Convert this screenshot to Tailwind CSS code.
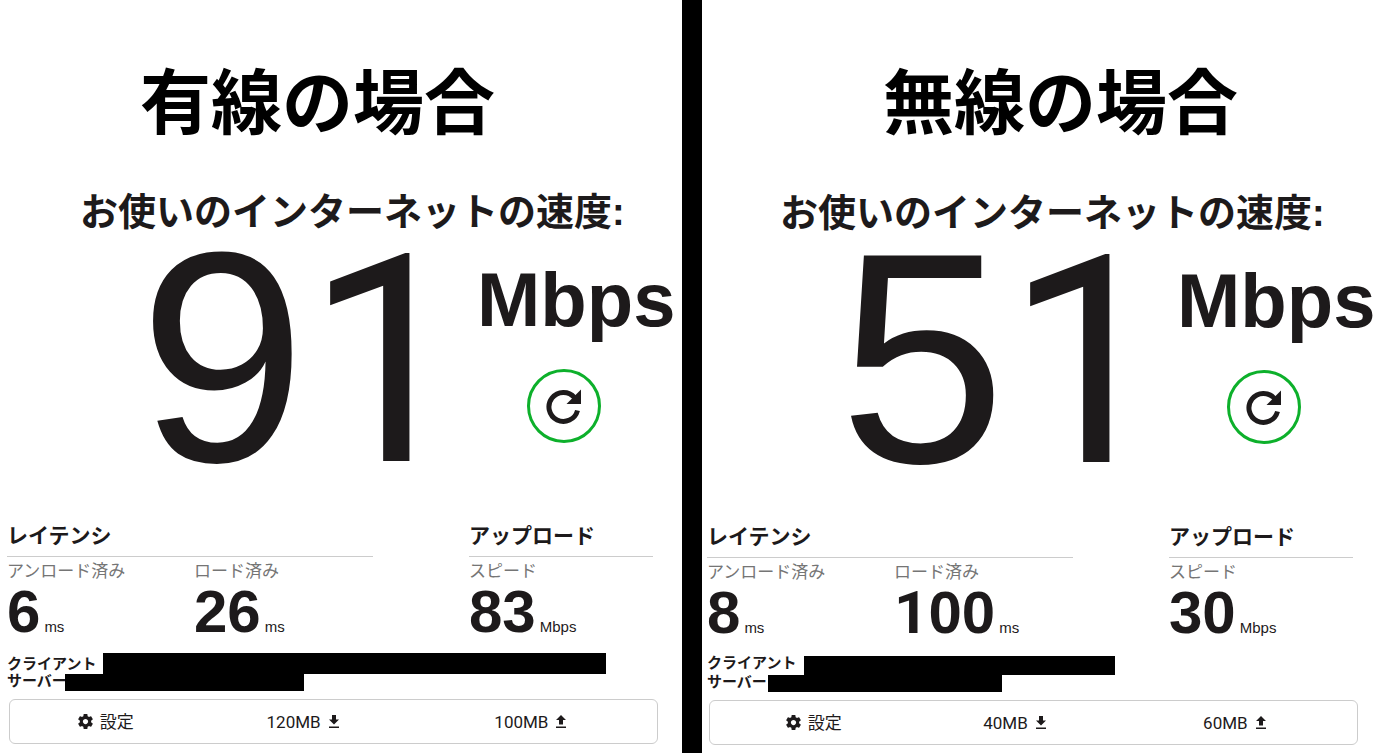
<!DOCTYPE html>
<html lang="ja">

<head>
    <meta charset="UTF-8">
    <meta name="viewport" content="width=device-width, initial-scale=1.0">
    <title>有線と無線の速度比較</title>
    <script src="https://cdn.jsdelivr.net/npm/@tailwindcss/browser@4"></script>
</head>

<body class="bg-white font-['Liberation_Sans','Noto_Sans_CJK_JP',sans-serif] text-[#1d1a1b]">
    <!-- Shared icons -->
    <svg class="hidden">
        <symbol id="refresh" viewBox="0 0 36 36">
            <path d="M31.500 22.500A14.500 14.500 0 1 1 28.500 9.500" fill="none" stroke="currentColor" stroke-width="5" />
            <path d="M35 1.500V16H20.500Z" fill="currentColor" />
        </symbol>
        <symbol id="gear" viewBox="2 2 20 20">
            <path fill="currentColor" d="M19.430 12.980c.04-.32.07-.64.07-.98s-.03-.66-.07-.98l2.110-1.650c.19-.15.24-.42.12-.64l-2-3.460c-.12-.22-.39-.3-.61-.22l-2.490 1c-.52-.4-1.080-.73-1.690-.98l-.38-2.650C14.460 2.180 14.250 2 14 2h-4c-.25 0-.46.18-.49.42l-.38 2.650c-.61.25-1.170.59-1.690.98l-2.490-1c-.23-.09-.49 0-.61.22l-2 3.460c-.13.22-.07.49.12.64l2.110 1.650c-.04.32-.07.65-.07.98s.03.66.07.98l-2.110 1.650c-.19.15-.24.42-.12.64l2 3.460c.12.22.39.3.61.22l2.490-1c.52.4 1.080.73 1.690.98l.38 2.650c.03.24.24.42.49.42h4c.25 0 .46-.18.49-.42l.38-2.650c.61-.25 1.170-.59 1.690-.98l2.490 1c.23.09.49 0 .61-.22l2-3.460c.12-.22.07-.49-.12-.64l-2.110-1.650zM12 15.500c-1.930 0-3.500-1.570-3.500-3.500s1.570-3.500 3.500-3.500 3.500 1.570 3.500 3.500-1.570 3.500-3.500 3.500z" />
        </symbol>
        <symbol id="download" viewBox="0 0 12 14">
            <path fill="currentColor" d="M4 0h4v4.500h3L6 9.500 1 4.500h3zM1 11.500h10V13H1z" />
        </symbol>
        <symbol id="upload" viewBox="0 0 12 14">
            <path fill="currentColor" d="M4 9.500h4V5h3L6 0 1 5h3zM1 11.500h10V13H1z" />
        </symbol>
    </svg>

    <main class="flex min-h-screen">
        <!-- Wired -->
        <section class="flex-[682] min-w-0 pt-16">
            <h1 class="pl-[140px] text-[71px] leading-[80px] font-bold text-black whitespace-nowrap">有線の場合</h1>
            <h2 class="mt-12 pl-20 text-[38px] leading-10 font-bold whitespace-nowrap">お使いのインターネットの速度:</h2>
            <div class="flex pl-[139px]">
                <p class="w-[338px] shrink-0 text-[300px] leading-[250px] whitespace-nowrap">9<span class="font-[Roboto] text-[291px] leading-0">1</span></p>
                <div class="pt-7">
                    <p class="text-[76px] leading-20 font-bold">Mbps</p>
                    <button type="button" aria-label="再テスト"
                        class="mt-[29px] ml-[50px] flex size-[74px] items-center justify-center rounded-full border-3 border-[#0db02b]">
                        <svg class="size-9"><use href="#refresh" /></svg>
                    </button>
                </div>
            </div>

            <div class="grid grid-cols-[366fr_184fr] gap-24 pt-[42px] pl-[7px] pr-[29px]">
                <div>
                    <h3 class="border-b border-[#ccc] pb-2 text-[21px] leading-6 font-bold">レイテンシ</h3>
                    <div class="mt-1 grid grid-cols-[187fr_179fr]">
                        <div>
                            <p class="text-[17px] leading-[22px] text-[#757575]">アンロード済み</p>
                            <p class="text-[60px] leading-[58px] font-bold">6<span class="ml-1 text-[15px] leading-0 font-normal">ms</span></p>
                        </div>
                        <div>
                            <p class="text-[17px] leading-[22px] text-[#757575]">ロード済み</p>
                            <p class="text-[60px] leading-[58px] font-bold">26<span class="ml-1 text-[15px] leading-0 font-normal">ms</span></p>
                        </div>
                    </div>
                </div>
                <div>
                    <h3 class="border-b border-[#ccc] pb-2 text-[21px] leading-6 font-bold">アップロード</h3>
                    <p class="mt-1 text-[17px] leading-[22px] text-[#757575]">スピード</p>
                    <p class="text-[60px] leading-[58px] font-bold">83<span class="ml-1 text-[15px] leading-0 font-normal">Mbps</span></p>
                </div>
            </div>

            <dl class="mt-3 pl-[7px] text-[15px] leading-[18px] font-bold">
                <div class="flex items-center">
                    <dt class="w-24 shrink-0 whitespace-nowrap">クライアント</dt>
                    <dd class="h-[21px] w-[503px] bg-black"></dd>
                </div>
                <div class="flex h-[17px]">
                    <dt class="-mt-0.5 w-[58px] shrink-0 whitespace-nowrap">サーバー</dt>
                    <dd class="h-[17px] w-[239px] bg-black"></dd>
                </div>
            </dl>

            <div class="mt-2 mr-6 ml-[9px] grid h-[45px] grid-cols-[192fr_204fr_253fr] items-center justify-items-center rounded-md border border-[#ccc] font-[Roboto,'Noto_Sans_CJK_JP',sans-serif] text-[17px] leading-6">
                <button type="button" class="flex items-center gap-[7px]"><svg class="size-[15px]"><use href="#gear" /></svg>設定</button>
                <span class="flex items-center gap-[7px]">120MB<svg class="h-[14px] w-3"><use href="#download" /></svg></span>
                <span class="flex items-center gap-[7px]">100MB<svg class="h-[14px] w-3"><use href="#upload" /></svg></span>
            </div>
        </section>

        <div class="w-5 shrink-0 bg-black"></div>

        <!-- Wireless -->
        <section class="flex-[677] min-w-0 pt-16">
            <h1 class="pl-[181px] text-[71px] leading-[80px] font-bold text-black whitespace-nowrap">無線の場合</h1>
            <h2 class="mt-[49px] pl-[78px] text-[38px] leading-10 font-bold whitespace-nowrap">お使いのインターネットの速度:</h2>
            <div class="flex pl-[137px]">
                <p class="w-[338px] shrink-0 text-[300px] leading-[250px] whitespace-nowrap">5<span class="font-[Roboto] text-[291px] leading-0">1</span></p>
                <div class="pt-7">
                    <p class="text-[76px] leading-20 font-bold">Mbps</p>
                    <button type="button" aria-label="再テスト"
                        class="mt-[29px] ml-[50px] flex size-[74px] items-center justify-center rounded-full border-3 border-[#0db02b]">
                        <svg class="size-9"><use href="#refresh" /></svg>
                    </button>
                </div>
            </div>

            <div class="grid grid-cols-[366fr_184fr] gap-24 pt-[42px] pl-[5px] pr-[26px]">
                <div>
                    <h3 class="border-b border-[#ccc] pb-2 text-[21px] leading-6 font-bold">レイテンシ</h3>
                    <div class="mt-1 grid grid-cols-[187fr_179fr]">
                        <div>
                            <p class="text-[17px] leading-[22px] text-[#757575]">アンロード済み</p>
                            <p class="text-[60px] leading-[58px] font-bold">8<span class="ml-1 text-[15px] leading-0 font-normal">ms</span></p>
                        </div>
                        <div>
                            <p class="text-[17px] leading-[22px] text-[#757575]">ロード済み</p>
                            <p class="text-[60px] leading-[58px] font-bold"><span class="font-[Roboto] leading-0">1</span>00<span class="ml-1 text-[15px] leading-0 font-normal">ms</span></p>
                        </div>
                    </div>
                </div>
                <div>
                    <h3 class="border-b border-[#ccc] pb-2 text-[21px] leading-6 font-bold">アップロード</h3>
                    <p class="mt-1 text-[17px] leading-[22px] text-[#757575]">スピード</p>
                    <p class="text-[60px] leading-[58px] font-bold">30<span class="ml-1 text-[15px] leading-0 font-normal">Mbps</span></p>
                </div>
            </div>

            <dl class="mt-[14px] pl-[5px] text-[15px] leading-[18px] font-bold">
                <div class="flex h-[19px]">
                    <dt class="-mt-0.5 w-[97px] shrink-0 whitespace-nowrap">クライアント</dt>
                    <dd class="h-[19px] w-[311px] bg-black"></dd>
                </div>
                <div class="flex h-[17px]">
                    <dt class="-mt-0.5 w-[61px] shrink-0 whitespace-nowrap">サーバー</dt>
                    <dd class="h-[17px] w-[234px] bg-black"></dd>
                </div>
            </dl>

            <div class="mt-2 mr-[21px] ml-[7px] grid h-[45px] grid-cols-[208fr_196fr_245fr] items-center justify-items-center rounded-md border border-[#ccc] font-[Roboto,'Noto_Sans_CJK_JP',sans-serif] text-[17px] leading-6">
                <button type="button" class="flex items-center gap-[7px]"><svg class="size-[15px]"><use href="#gear" /></svg>設定</button>
                <span class="flex items-center gap-[7px]">40MB<svg class="h-[14px] w-3"><use href="#download" /></svg></span>
                <span class="flex items-center gap-[7px]">60MB<svg class="h-[14px] w-3"><use href="#upload" /></svg></span>
            </div>
        </section>
    </main>
</body>

</html>
